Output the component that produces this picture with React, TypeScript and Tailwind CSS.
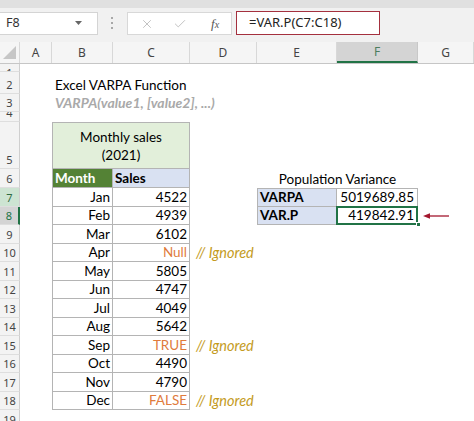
import React from 'react';
import { X, Check } from 'lucide-react';

type Variant = 'none' | 'hl' | 'sel';

function RowHead({ n, variant = 'none', top = false }: { n: string; variant?: Variant; top?: boolean }) {
  const base =
    "w-[20px] shrink-0 flex justify-center overflow-hidden text-[11px] leading-[15px] font-['Noto_Sans',sans-serif] border-b border-b-[#dedede]";
  const align = top ? 'items-start pt-[1px]' : 'items-end pb-[1px]';
  if (variant === 'hl')
    return <div className={`${base} ${align} bg-[#cde4d2] text-[#2f6b43] border-r border-r-[#cfcfcf]`}>{n}</div>;
  if (variant === 'sel')
    return <div className={`${base} ${align} bg-[#d4d4d4] text-[#217346] border-r-2 border-r-[#217346]`}>{n}</div>;
  return <div className={`${base} ${align} bg-[#f3f3f3] text-[#444] border-r border-r-[#cfcfcf]`}>{n}</div>;
}

const months: [string, string, boolean][] = [
  ['Jan', '4522', false],
  ['Feb', '4939', false],
  ['Mar', '6102', false],
  ['Apr', 'Null', true],
  ['May', '5805', false],
  ['Jun', '4747', false],
  ['Jul', '4049', false],
  ['Aug', '5642', false],
  ['Sep', 'TRUE', true],
  ['Oct', '4490', false],
  ['Nov', '4790', false],
  ['Dec', 'FALSE', true],
];

function ColHead({ l, w, sel = false }: { l: string; w: string; sel?: boolean }) {
  if (sel)
    return (
      <div className={`${w} shrink-0 flex items-center justify-center bg-[#d4d4d4] border-r border-[#c8c8c8] border-b-2 border-b-[#217346] text-[#4d7d5e]`}>
        {l}
      </div>
    );
  return (
    <div className={`${w} shrink-0 flex items-center justify-center border-r border-[#d8d8d8] text-[#444]`}>{l}</div>
  );
}

export default function App() {
  return (
    <div className="w-[474px] h-[421px] overflow-hidden bg-white font-['Lato',sans-serif] text-[13.5px] text-black">
      {/* ribbon strip */}
      <div className="h-[8px] bg-[#e0e0e0]" />
      {/* formula bar */}
      <div className="h-[34px] bg-[#f1f1f1] flex items-start pt-[3px] font-['Noto_Sans',sans-serif]">
        <div className="mt-[1px] w-[98px] h-[23px] bg-white border border-l-0 border-[#d4d4d4] flex items-center pl-[6px] text-[12.5px] text-[#333]">
          <span>F8</span>
          <svg className="ml-auto mr-[15px]" width="7" height="5" viewBox="0 0 7 5">
            <polygon points="0,0 7,0 3.5,4" fill="#666" />
          </svg>
        </div>
        <div className="ml-[13px] mt-[6px] flex flex-col gap-[3px]">
          <div className="w-[2px] h-[2px] bg-[#a8a8a8]" />
          <div className="w-[2px] h-[2px] bg-[#a8a8a8]" />
          <div className="w-[2px] h-[2px] bg-[#a8a8a8]" />
        </div>
        <div className="ml-[14px] mt-[1px] w-[105px] h-[23px] bg-white border border-[#d8d8d8] flex items-center">
          <X className="ml-[12px]" size={14} strokeWidth={1.3} color="#b0b0b0" />
          <Check className="ml-[19px]" size={14} strokeWidth={1.3} color="#b0b0b0" />
          <span className="ml-[24px] font-['Liberation_Serif',serif] italic text-[13px] text-[#555]">
            f<span className="text-[10px]">x</span>
          </span>
        </div>
        <div className="ml-[4px] w-[144px] h-[24px] bg-white border border-[#a4303e] flex items-center pl-[12px] text-[13px] text-[#222]">
          =VAR.P(C7:C18)
        </div>
      </div>
      {/* column header */}
      <div className="flex h-[22px] bg-[#f5f5f5] border-b border-[#c6c6c6] font-['Noto_Sans',sans-serif] text-[12px]">
        <div className="w-[20px] shrink-0 border-r border-[#d8d8d8]">
          <svg width="19" height="21" viewBox="0 0 19 21">
            <polygon points="16,4 16,17 3,17" fill="#c6c6c6" />
          </svg>
        </div>
        <ColHead l="A" w="w-[32px]" />
        <ColHead l="B" w="w-[61px]" />
        <ColHead l="C" w="w-[77px]" />
        <ColHead l="D" w="w-[67px]" />
        <ColHead l="E" w="w-[80px]" />
        <ColHead l="F" w="w-[81px]" sel />
        <ColHead l="G" w="w-[56px]" />
      </div>

      {/* row 1 */}
      <div className="flex h-[8px]">
        <RowHead n="1" top />
        <div className="flex-1" />
      </div>
      {/* row 2 */}
      <div className="flex h-[22px]">
        <RowHead n="2" />
        <div className="w-[32px] shrink-0" />
        <div className="flex items-end pb-[1px] pl-[3px] leading-[16px] whitespace-nowrap">Excel VARPA Function</div>
      </div>
      {/* row 3 */}
      <div className="flex h-[18px]">
        <RowHead n="3" />
        <div className="w-[32px] shrink-0" />
        <div className="flex items-end pb-[1px] pl-[3px] leading-[16px] whitespace-nowrap italic font-bold text-[14px] text-[#a9a9a9]">
          VARPA(value1, [value2], ...)
        </div>
      </div>
      {/* row 4 */}
      <div className="flex h-[10px]">
        <RowHead n="4" />
        <div className="flex-1" />
      </div>
      {/* row 5 */}
      <div className="flex h-[47px]">
        <RowHead n="5" />
        <div className="w-[32px] shrink-0" />
        <div className="w-[138px] shrink-0 bg-[#e2efda] border border-[#b4b4b4] flex flex-col items-center justify-center leading-[18px]">
          <span>Monthly sales</span>
          <span>(2021)</span>
        </div>
      </div>
      {/* row 6 */}
      <div className="flex h-[19px]">
        <RowHead n="6" />
        <div className="w-[32px] shrink-0" />
        <div className="w-[61px] shrink-0 bg-[#548235] border-l border-r border-b border-[#b4b4b4] flex items-end pb-[1px] pl-[2px] leading-[16px] font-bold text-white">
          Month
        </div>
        <div className="w-[77px] shrink-0 bg-[#d9e1f2] border-r border-b border-[#b4b4b4] flex items-end pb-[1px] pl-[2px] leading-[16px] font-bold">
          Sales
        </div>
        <div className="w-[67px] shrink-0" />
        <div className="w-[161px] shrink-0 flex items-end justify-center pb-[1px] leading-[16px] whitespace-nowrap">
          Population Variance
        </div>
      </div>
      {/* rows 7 - 18 */}
      {months.map(([m, v, ign], i) => {
        const n = i + 7;
        return (
          <div key={m} className="flex h-[18.5px]">
            <RowHead n={String(n)} variant={n === 7 ? 'hl' : n === 8 ? 'sel' : 'none'} />
            <div className="w-[32px] shrink-0" />
            <div className="w-[61px] shrink-0 border-l border-r border-b border-[#b4b4b4] flex items-end justify-end pb-[1px] pr-[2px] leading-[16px]">
              {m}
            </div>
            <div
              className={`w-[77px] shrink-0 border-r border-b border-[#b4b4b4] flex items-end justify-end pb-[1px] pr-[2px] leading-[16px] ${
                ign ? 'text-[#e07b3c]' : ''
              }`}
            >
              {v}
            </div>
            <div className="w-[67px] shrink-0 flex items-end pb-[1px] pl-[6px] leading-[16px] whitespace-nowrap italic text-[14.5px] text-[#c49b1e]">
              {ign ? '// Ignored' : ''}
            </div>
            {n === 7 && (
              <>
                <div className="w-[80px] shrink-0 bg-[#d9e1f2] border border-[#b4b4b4] flex items-end pb-[1px] pl-[2px] leading-[16px] font-bold">
                  VARPA
                </div>
                <div className="w-[81px] shrink-0 border-t border-r border-b border-[#b4b4b4] flex items-end justify-end pb-[1px] pr-[3px] leading-[16px]">
                  5019689.85
                </div>
              </>
            )}
            {n === 8 && (
              <>
                <div className="w-[80px] shrink-0 bg-[#d9e1f2] border-l border-r border-b border-[#b4b4b4] flex items-end pb-[1px] pl-[2px] leading-[16px] font-bold">
                  VAR.P
                </div>
                <div className="relative w-[81px] shrink-0 border-r border-b border-[#b4b4b4] flex items-end justify-end pb-[1px] pr-[3px] leading-[16px]">
                  419842.91
                  <div className="absolute top-[-1px] left-[-1px] right-[-1px] bottom-[-1px] border-2 border-[#217346]" />
                  <div className="absolute right-[-4px] bottom-[-3px] w-[5px] h-[5px] bg-[#217346] border border-white" />
                </div>
                <div className="flex items-center pl-[5px]">
                  <svg width="26" height="8" viewBox="0 0 26 8">
                    <line x1="5" y1="4" x2="26" y2="4" stroke="#a3162d" strokeWidth="1.3" />
                    <polygon points="0,4 7,1.3 7,6.7" fill="#a3162d" />
                  </svg>
                </div>
              </>
            )}
          </div>
        );
      })}
      {/* row 19 */}
      <div className="flex h-[18.5px]">
        <RowHead n="19" />
        <div className="flex-1" />
      </div>
    </div>
  );
}
